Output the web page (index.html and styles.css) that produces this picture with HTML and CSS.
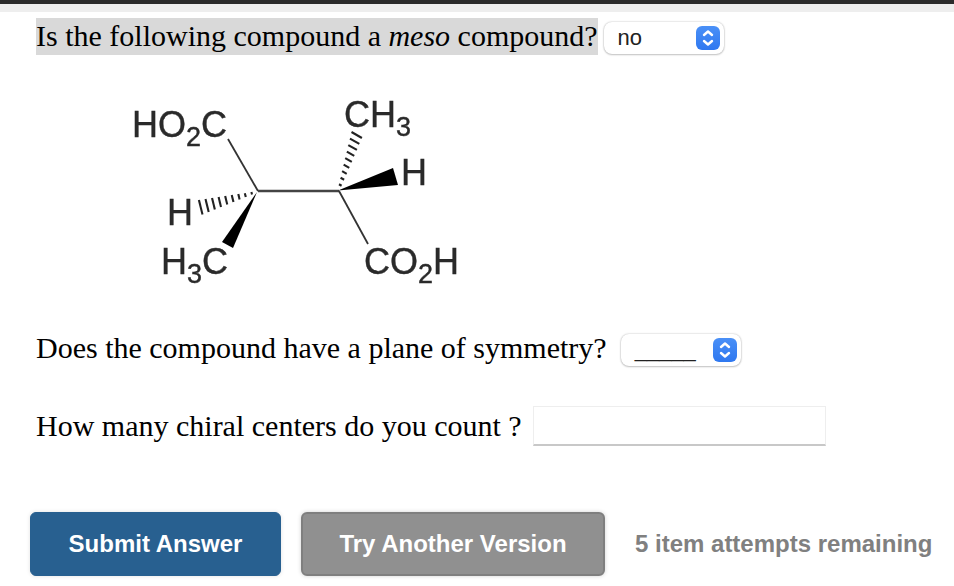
FILE: index.html
```html
<!DOCTYPE html>
<html lang="en">
<head>
<meta charset="utf-8">
<title>Meso compound question</title>
<link rel="stylesheet" href="styles.css">
</head>
<body>
<div class="topbar"></div>
<div class="strip"></div>
<form class="page">
  <div class="row row-one">
    <span class="question highlighted">Is the following compound a <em>meso</em> compound?</span>
    <div class="picker picker-one">
      <span class="picker-value">no</span>
      <span class="picker-button">
        <svg class="chevrons" viewBox="0 0 24 24"><path d="M8 9 12 5.500l4 3.500M8 15l4 3.500 4-3.500"/></svg>
      </span>
    </div>
  </div>

  <figure class="molecule">
    <svg class="molecule-art" viewBox="120 90 360 210" width="360" height="210">
      <g class="bonds">
        <line x1="228" y1="139" x2="258" y2="191"/>
        <line x1="258" y1="191" x2="339" y2="191" class="bond-main"/>
        <line x1="339" y1="191" x2="368" y2="244"/>
      </g>
      <polygon class="wedge" points="338,190.500 393,168 398,185"/>
      <polygon class="wedge" points="257,192 222,242 233,248"/>
      <g class="hash">
        <line x1="251.400" y1="192.100" x2="252" y2="194.500"/>
        <line x1="244.800" y1="193.150" x2="245.800" y2="196.950"/>
        <line x1="238.300" y1="194.100" x2="239.600" y2="199.500"/>
        <line x1="231.750" y1="195.100" x2="233.450" y2="202"/>
        <line x1="225.150" y1="196.100" x2="227.250" y2="204.500"/>
        <line x1="218.600" y1="197.100" x2="221" y2="207"/>
        <line x1="212.050" y1="198.100" x2="214.850" y2="209.500"/>
        <line x1="205.500" y1="199.050" x2="208.700" y2="212.050"/>
        <line x1="198.900" y1="200" x2="202.500" y2="214.600"/>
        <line x1="339" y1="184.250" x2="341.600" y2="185.750"/>
        <line x1="340.550" y1="177.750" x2="344.150" y2="179.750"/>
        <line x1="342.100" y1="171.200" x2="346.700" y2="173.800"/>
        <line x1="343.650" y1="164.650" x2="349.250" y2="167.850"/>
        <line x1="345.200" y1="158.100" x2="351.800" y2="161.900"/>
        <line x1="346.850" y1="151.600" x2="354.250" y2="155.900"/>
        <line x1="348.300" y1="145.050" x2="356.900" y2="149.950"/>
        <line x1="349.950" y1="138.550" x2="359.350" y2="143.950"/>
        <line x1="351.500" y1="132" x2="361.900" y2="138"/>
      </g>
      <g class="atoms">
        <text x="132" y="137">HO<tspan class="sub" dy="9">2</tspan><tspan dy="-9">C</tspan></text>
        <text x="344" y="127">CH<tspan class="sub" dy="9">3</tspan></text>
        <text x="401" y="185">H</text>
        <text x="167" y="225">H</text>
        <text x="161" y="274">H<tspan class="sub" dy="9">3</tspan><tspan dy="-9">C</tspan></text>
        <text x="364" y="274">CO<tspan class="sub" dy="9">2</tspan><tspan dy="-9">H</tspan></text>
      </g>
    </svg>
  </figure>

  <div class="row row-two">
    <span class="question">Does the compound have a plane of symmetry?</span>
    <div class="picker picker-two">
      <span class="picker-value">_____</span>
      <span class="picker-button">
        <svg class="chevrons" viewBox="0 0 24 24"><path d="M8 9 12 5.500l4 3.500M8 15l4 3.500 4-3.500"/></svg>
      </span>
    </div>
  </div>

  <div class="row row-three">
    <span class="question">How many chiral centers do you count ?</span>
    <input class="answer" type="text" aria-label="Chiral centers">
  </div>

  <div class="actions">
    <button class="btn btn-submit" type="button">Submit Answer</button>
    <button class="btn btn-another" type="button">Try Another Version</button>
    <span class="attempts">5 item attempts remaining</span>
  </div>
</form>
</body>
</html>
```
FILE: styles.css
```css
* { box-sizing: border-box; }

html, body {
  margin: 0;
  height: 100%;
  background: #fff;
  overflow: hidden;
}

.topbar { height: 4px; background: #2b2b2b; }
.strip { height: 8px; background: #eeeeee; }

.page {
  padding: 6px 0 0 30px;
}

.row {
  display: flex;
  align-items: center;
  margin-left: 6px;
}

.question {
  font-family: "Liberation Serif", "Times New Roman", serif;
  font-size: 30px;
  line-height: 37px;
  color: #000;
  white-space: nowrap;
}

.highlighted {
  line-height: 35px;
  padding-bottom: 2px;
  background: #d9d9d9;
}

.row-one { height: 37px; gap: 6px; }
.row-two { height: 32px; margin-top: 34px; gap: 14px; }
.row-three { height: 40px; margin-top: 40px; gap: 11px; }

.row-two .question { margin-bottom: 5px; }
.row-three .question { margin-bottom: 2px; }

.picker {
  display: flex;
  align-items: center;
  justify-content: space-between;
  width: 120px;
  height: 32px;
  padding: 0 4px 0 14px;
  background: #fff;
  border-radius: 8px;
  box-shadow: 0 0 2px rgba(0, 0, 0, 0.28), 0 1px 2px rgba(0, 0, 0, 0.18);
  font-family: "Liberation Sans", Arial, sans-serif;
  font-size: 22px;
  color: #222;
}

.picker-one { margin-top: 3px; }

.picker-button {
  display: flex;
  width: 24px;
  height: 24px;
  border-radius: 6px;
  background: linear-gradient(#4a90f7, #2f78f0);
}

.chevrons {
  width: 24px;
  height: 24px;
  fill: none;
  stroke: #fff;
  stroke-width: 2.4;
  stroke-linecap: round;
  stroke-linejoin: round;
}

.molecule {
  margin: 35px 0 0 90px;
  width: 360px;
  height: 210px;
}

.molecule-art {
  display: block;
  filter: blur(0.55px);
}

.bonds line { stroke: #333; stroke-width: 1.8; }
.bonds .bond-main { stroke: #444; stroke-width: 2.6; }
.wedge { fill: #000; }
.hash line { stroke: #222; stroke-width: 2.1; }

.atoms text {
  font-family: "Liberation Sans", Arial, sans-serif;
  font-size: 36px;
  fill: #2a2a2a;
  stroke: #2a2a2a;
  stroke-width: 0.4;
}

.atoms .sub { font-size: 27px; }

.answer {
  width: 293px;
  height: 40px;
  padding: 0 8px;
  background: #fff;
  border: 1px solid #eeeeee;
  border-bottom: 2px solid #c8c8c8;
  outline: none;
}

.actions {
  display: flex;
  align-items: center;
  margin-top: 66px;
}

.btn {
  height: 64px;
  border-radius: 6px;
  font-family: "Liberation Sans", Arial, sans-serif;
  font-size: 24px;
  font-weight: 700;
  color: #fff;
  padding: 0;
  cursor: pointer;
}

.btn-submit {
  width: 251px;
  background: #286090;
  border: 1px solid #286090;
  box-shadow: 0 0 4px rgba(0, 0, 0, 0.12);
}

.btn-another {
  width: 304px;
  margin-left: 20px;
  background: #909090;
  border: 2px solid #7f7f7f;
  box-shadow: 0 0 4px rgba(0, 0, 0, 0.18);
}

.attempts {
  margin-left: 30px;
  font-family: "Liberation Sans", Arial, sans-serif;
  font-size: 24px;
  font-weight: 700;
  color: #808080;
  white-space: nowrap;
}
```
